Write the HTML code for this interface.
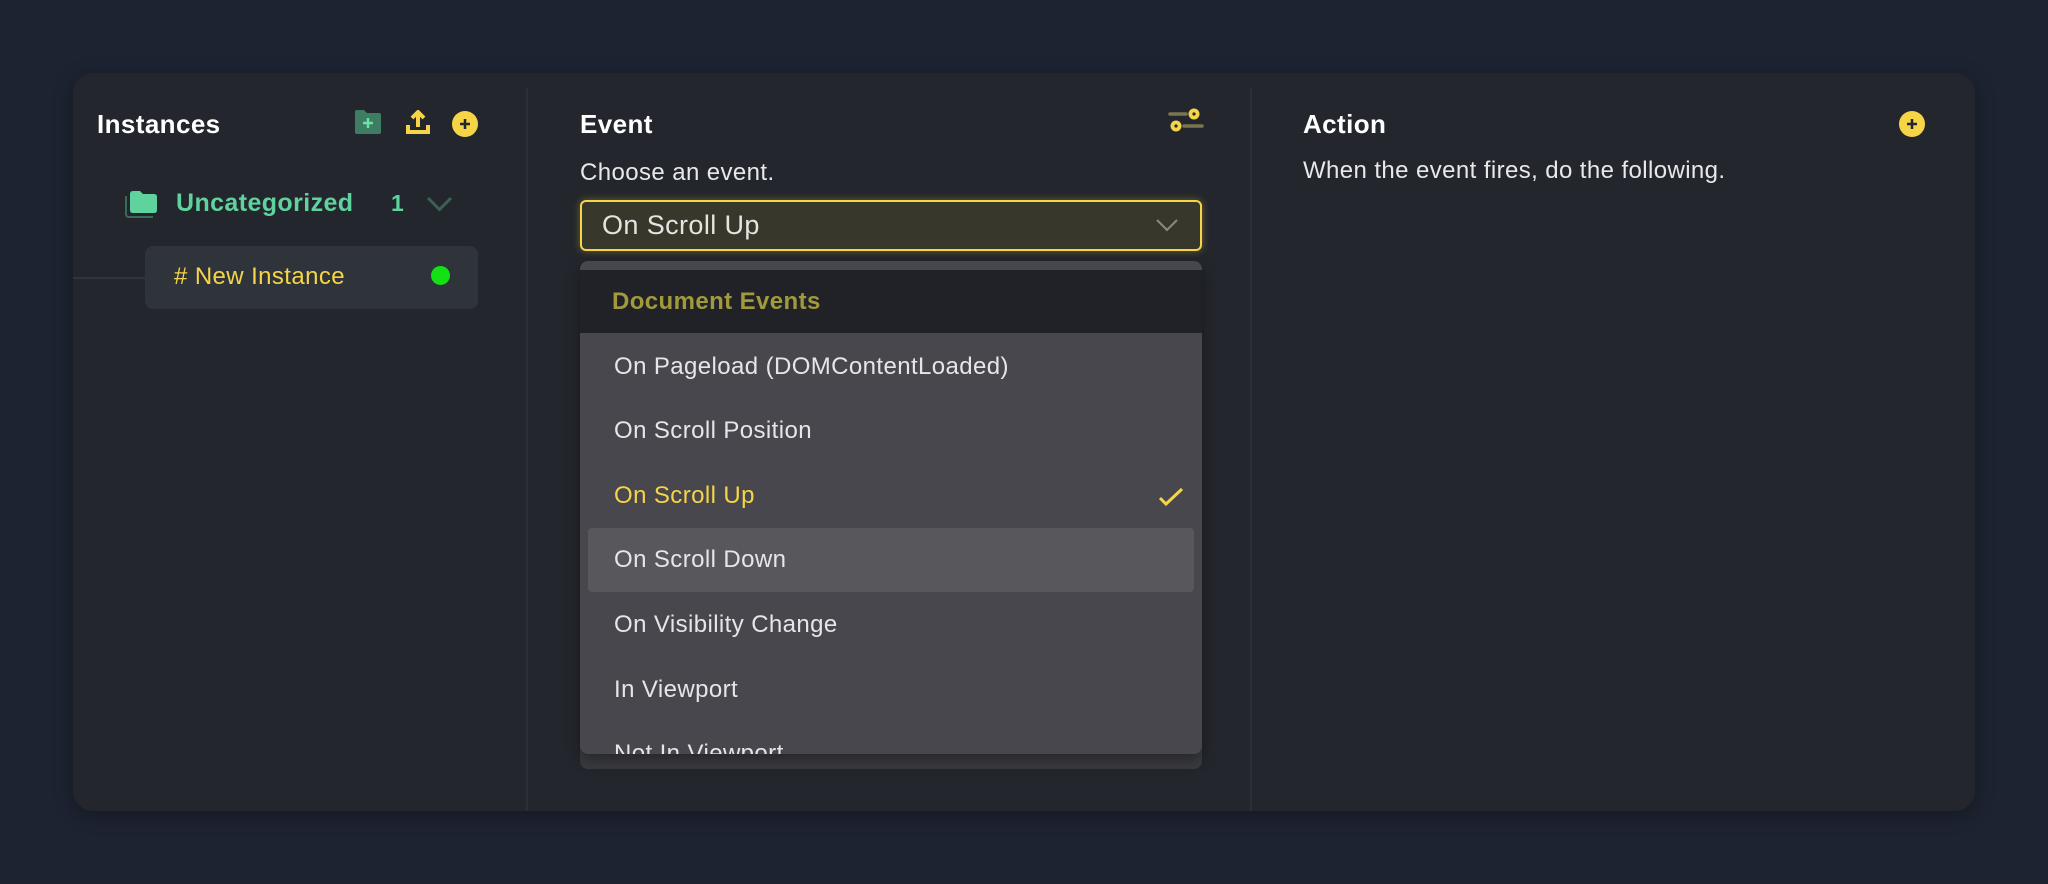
<!DOCTYPE html>
<html><head><meta charset="utf-8"><style>
*{margin:0;padding:0;box-sizing:border-box}
body{width:2048px;height:884px;background:#1d2331;font-family:"Liberation Sans",sans-serif;position:relative;overflow:hidden;letter-spacing:0.4px}
.card{position:absolute;left:73px;top:73px;width:1902px;height:738px;background:#23262c;border-radius:20px;box-shadow:0 4px 20px rgba(0,0,0,.3)}
.a{position:absolute;white-space:nowrap}
.h{font-weight:bold;font-size:26px;color:#fff}
.vd{position:absolute;top:88px;width:2px;height:723px;background:#2b2f36}
</style></head><body>
<div class="card"></div>
<div class="vd" style="left:526px"></div>
<div class="vd" style="left:1250px"></div>

<div class="a h" style="left:97px;top:109px">Instances</div>
<svg class="a" style="left:354px;top:109px" width="28" height="26" viewBox="0 0 28 26"><path d="M1 3q0-2 2-2h7l3 3h12q2 0 2 2v17q0 2-2 2H3q-2 0-2-2z" fill="#3f7d63"/><path d="M14 9v10M9 14h10" stroke="#6ee0a8" stroke-width="2.5"/></svg>
<svg class="a" style="left:405px;top:108px" width="26" height="28" viewBox="0 0 26 28"><path d="M13 19V4M7 10l6-6 6 6" stroke="#f5d547" stroke-width="4" fill="none" stroke-linejoin="round"/><path d="M3 17v7h20v-7" stroke="#f5d547" stroke-width="4" fill="none"/></svg>
<svg class="a" style="left:452px;top:111px" width="26" height="26" viewBox="0 0 26 26"><circle cx="13" cy="13" r="13" fill="#f5d547"/><path d="M13 8v10M8 13h10" stroke="#23262c" stroke-width="2.5"/></svg>

<svg class="a" style="left:125px;top:190px" width="33" height="28" viewBox="0 0 33 28"><path d="M1 6v18q0 3 3 3h24" stroke="#3a6a57" stroke-width="2" fill="none"/><path d="M5 4q0-3 3-3h7l3 3h11q3 0 3 3v13q0 3-3 3H8q-3 0-3-3z" fill="#5fd39d"/></svg>
<div class="a" style="left:176px;top:189px;font-size:25px;font-weight:bold;color:#5fd39d">Uncategorized</div>
<div class="a" style="left:391px;top:190px;font-size:23px;font-weight:bold;color:#5fd39d">1</div>
<svg class="a" style="left:426px;top:196px" width="27" height="16" viewBox="0 0 27 16"><path d="M2 2l11.5 11.5L25 2" stroke="#3e5f55" stroke-width="3" fill="none"/></svg>

<div class="a" style="left:73px;top:277px;width:72px;height:2px;background:#30343b"></div>
<div class="a" style="left:145px;top:246px;width:333px;height:63px;background:#2f343b;border-radius:8px"></div>
<div class="a" style="left:174px;top:263px;font-size:24px;color:#f5d547"># New Instance</div>
<div class="a" style="left:431px;top:266px;width:19px;height:19px;border-radius:50%;background:#13e113"></div>

<div class="a h" style="left:580px;top:109px">Event</div>
<svg class="a" style="left:1166px;top:106px" width="40" height="30" viewBox="0 0 40 30"><path d="M4 8h16M18 20h18" stroke="#7b7550" stroke-width="3.5" stroke-linecap="round"/><circle cx="28" cy="8" r="5.5" fill="#f5d547"/><circle cx="28" cy="8" r="1.6" fill="#23262c"/><circle cx="10" cy="20" r="5.5" fill="#f5d547"/><circle cx="10" cy="20" r="1.6" fill="#23262c"/></svg>
<div class="a" style="left:580px;top:159px;font-size:24px;color:#e8e8ea">Choose an event.</div>
<div class="a" style="left:580px;top:200px;width:622px;height:51px;border:2px solid #f5d547;border-radius:6px;background:#37372c;box-shadow:0 0 8px rgba(245,213,71,.35)"></div>
<div class="a" style="left:602px;top:210px;font-size:27px;color:#e4e4e0">On Scroll Up</div>
<svg class="a" style="left:1156px;top:219px" width="22" height="13" viewBox="0 0 22 13"><path d="M1 1l10 10L21 1" stroke="#8a8a80" stroke-width="2" fill="none"/></svg>

<div class="a" style="left:580px;top:268px;width:622px;height:501px;background:#3a3b40;border-radius:8px"></div>
<div class="a" style="left:580px;top:261px;width:622px;height:493px;background:#48474d;border-radius:8px;overflow:hidden;box-shadow:0 6px 14px rgba(0,0,0,.35)">
 <div style="position:absolute;left:0;top:9px;width:622px;height:63px;background:#202227"></div>
 <div style="position:absolute;left:32px;top:27px;font-size:24px;font-weight:bold;color:#a09a3a">Document Events</div>
 <div style="position:absolute;left:8px;top:267px;width:606px;height:64px;background:#58575c;border-radius:4px"></div>
 <div style="position:absolute;left:34px;top:92px;font-size:24px;color:#e6e6e8">On Pageload (DOMContentLoaded)</div>
 <div style="position:absolute;left:34px;top:156px;font-size:24px;color:#e6e6e8">On Scroll Position</div>
 <div style="position:absolute;left:34px;top:221px;font-size:24px;color:#f5d547">On Scroll Up</div>
 <svg style="position:absolute;left:578px;top:225px" width="26" height="22" viewBox="0 0 26 22"><path d="M2 12l6 6L24 3" stroke="#f5d547" stroke-width="3" fill="none"/></svg>
 <div style="position:absolute;left:34px;top:285px;font-size:24px;color:#e6e6e8">On Scroll Down</div>
 <div style="position:absolute;left:34px;top:350px;font-size:24px;color:#e6e6e8">On Visibility Change</div>
 <div style="position:absolute;left:34px;top:415px;font-size:24px;color:#e6e6e8">In Viewport</div>
 <div style="position:absolute;left:34px;top:479px;font-size:24px;color:#e6e6e8">Not In Viewport</div>
</div>

<div class="a h" style="left:1303px;top:109px">Action</div>
<svg class="a" style="left:1899px;top:111px" width="26" height="26" viewBox="0 0 26 26"><circle cx="13" cy="13" r="13" fill="#f5d547"/><path d="M13 8v10M8 13h10" stroke="#23262c" stroke-width="2.5"/></svg>
<div class="a" style="left:1303px;top:157px;font-size:24px;color:#e8e8ea">When the event fires, do the following.</div>
</body></html>
